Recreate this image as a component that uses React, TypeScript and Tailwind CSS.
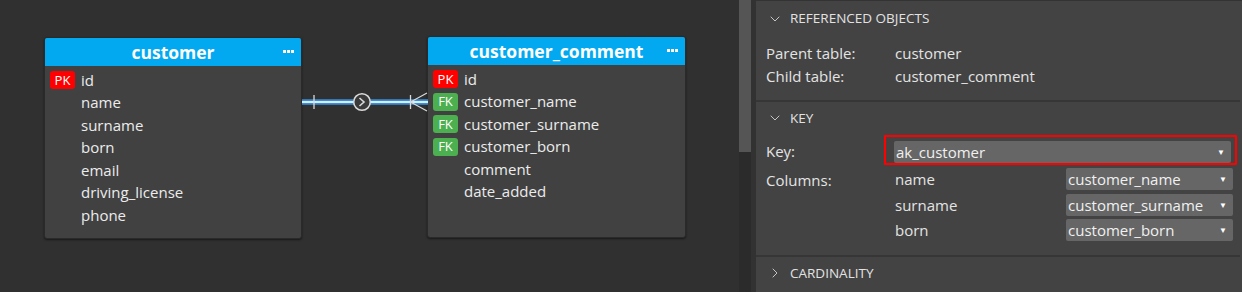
import { ChevronDown, ChevronRight } from 'lucide-react';

type Col = { name: string; tag?: 'PK' | 'FK' };

const customerCols: Col[] = [
  { name: 'id', tag: 'PK' },
  { name: 'name' },
  { name: 'surname' },
  { name: 'born' },
  { name: 'email' },
  { name: 'driving_license' },
  { name: 'phone' },
];

const commentCols: Col[] = [
  { name: 'id', tag: 'PK' },
  { name: 'customer_name', tag: 'FK' },
  { name: 'customer_surname', tag: 'FK' },
  { name: 'customer_born', tag: 'FK' },
  { name: 'comment' },
  { name: 'date_added' },
];

function TableNode({ title, cols, className }: { title: string; cols: Col[]; className: string }) {
  return (
    <div className={`absolute flex flex-col overflow-hidden rounded-[3px] border border-[#2a2a2a] bg-[#414141] shadow-[0_1px_2px_rgba(0,0,0,0.5)] ${className}`}>
      <div className="relative flex h-[28px] items-center justify-center bg-[#02a9f1]">
        <span className="text-[17.5px] font-bold text-white">{title}</span>
        <span className="absolute right-[7px] top-[12px] flex gap-[1px]">
          <span className="h-[3px] w-[3px] bg-white" />
          <span className="h-[3px] w-[3px] bg-white" />
          <span className="h-[3px] w-[3px] bg-white" />
        </span>
      </div>
      <div className="flex flex-col pt-[3px]">
        {cols.map((c) => (
          <div key={c.name} className="flex h-[22.45px] items-center">
            <div className="flex w-[36px] justify-start pl-[5px]">
              {c.tag && (
                <span
                  className={`flex h-[18px] w-[25px] items-center justify-center rounded-[3px] text-[13px] leading-none text-white ${
                    c.tag === 'PK' ? 'bg-[#ff0000]' : 'bg-[#4caf50]'
                  }`}
                >
                  {c.tag}
                </span>
              )}
            </div>
            <span className="text-[15px] text-[#ececec]">{c.name}</span>
          </div>
        ))}
      </div>
    </div>
  );
}

function Select({ value, className }: { value: string; className: string }) {
  return (
    <div className={`flex h-[22px] items-center justify-between rounded-[2px] bg-[#666666] pl-[2px] pr-[6px] text-[15px] text-[#f0f0f0] ${className}`}>
      <span>{value}</span>
      <span className="text-[8px] text-white">▼</span>
    </div>
  );
}

function SectionHead({ label, open, className }: { label: string; open: boolean; className: string }) {
  return (
    <div className={`flex items-center gap-[7px] pl-[11px] text-[13.5px] text-[#e2e2e2] ${className}`}>
      {open ? (
        <ChevronDown size={16} strokeWidth={1.4} className="text-[#cfcfcf]" />
      ) : (
        <ChevronRight size={16} strokeWidth={1.4} className="text-[#cfcfcf]" />
      )}
      <span>{label}</span>
    </div>
  );
}

export default function App() {
  return (
    <div
      className="flex h-[292px] w-[1242px] overflow-hidden bg-[#303030]"
      style={{ fontFamily: '"Open Sans", "Noto Sans", sans-serif' }}
    >
      <div className="relative h-full w-[739px] bg-[#303030]">
        <TableNode title="customer" cols={customerCols} className="left-[44px] top-[37px] h-[202px] w-[258px]" />
        <TableNode title="customer_comment" cols={commentCols} className="left-[427px] top-[36px] h-[202px] w-[259px]" />
        <svg className="absolute left-[302px] top-[90px]" width="126" height="24" viewBox="0 0 126 24">
          <line x1="0" y1="12" x2="126" y2="12" stroke="#3a8fd6" strokeWidth="5.5" />
          <line x1="0" y1="12" x2="126" y2="12" stroke="#d8ecfb" strokeWidth="2" />
          <line x1="12" y1="5" x2="12" y2="19" stroke="#d9d9d9" strokeWidth="1.3" />
          <circle cx="60" cy="12" r="8.3" fill="#3a3a3a" stroke="#d9d9d9" strokeWidth="1.6" />
          <path d="M57.5 8 L62 12 L57.5 16" fill="none" stroke="#d9d9d9" strokeWidth="1.6" />
          <line x1="108.5" y1="5" x2="108.5" y2="19" stroke="#d9d9d9" strokeWidth="1.3" />
          <path d="M108.5 12 L125 3 M108.5 12 L125 21" fill="none" stroke="#d9d9d9" strokeWidth="1.2" />
        </svg>
      </div>
      <div className="flex h-full w-[12px] flex-col bg-[#2b2b2b]">
        <div className="h-[152px] bg-[#555555]" />
      </div>
      <div className="w-[5px] bg-[#323232]" />
      <div className="flex h-full flex-1 flex-col border-t border-[#333333] bg-[#434343] pr-[2px]">
        <div className="flex h-[101px] flex-col border-b-2 border-[#363636]">
          <SectionHead label="REFERENCED OBJECTS" open className="h-[35px]" />
          <div className="grid grid-cols-[129px_1fr] pl-[10px] pt-[6px] text-[15px] leading-[23px] text-[#e4e4e4]">
            <span>Parent table:</span>
            <span>customer</span>
            <span>Child table:</span>
            <span>customer_comment</span>
          </div>
        </div>
        <div className="flex h-[155px] flex-col border-b-2 border-[#363636]">
          <SectionHead label="KEY" open className="h-[32px]" />
          <div className="grid grid-cols-[128px_1fr] pl-[10px] text-[15px] text-[#e4e4e4]">
            <span className="pt-[6px]">Key:</span>
            <div className="-ml-[10px] mr-[3px] mt-[1px] h-[30px] rounded-[1px] border-2 border-[#ff0000] pl-[8px] pr-[4px] pt-[4px]">
              <Select value="ak_customer" className="w-full" />
            </div>
            <span className="pt-[4px]">Columns:</span>
            <div className="flex flex-col gap-[3px] pt-[3px] pr-[7px]">
              {[
                ['name', 'customer_name'],
                ['surname', 'customer_surname'],
                ['born', 'customer_born'],
              ].map(([a, b]) => (
                <div key={a} className="flex items-center justify-between pl-[1px]">
                  <span>{a}</span>
                  <Select value={b} className="w-[167px]" />
                </div>
              ))}
            </div>
          </div>
        </div>
        <SectionHead label="CARDINALITY" open={false} className="h-[32px]" />
      </div>
    </div>
  );
}
